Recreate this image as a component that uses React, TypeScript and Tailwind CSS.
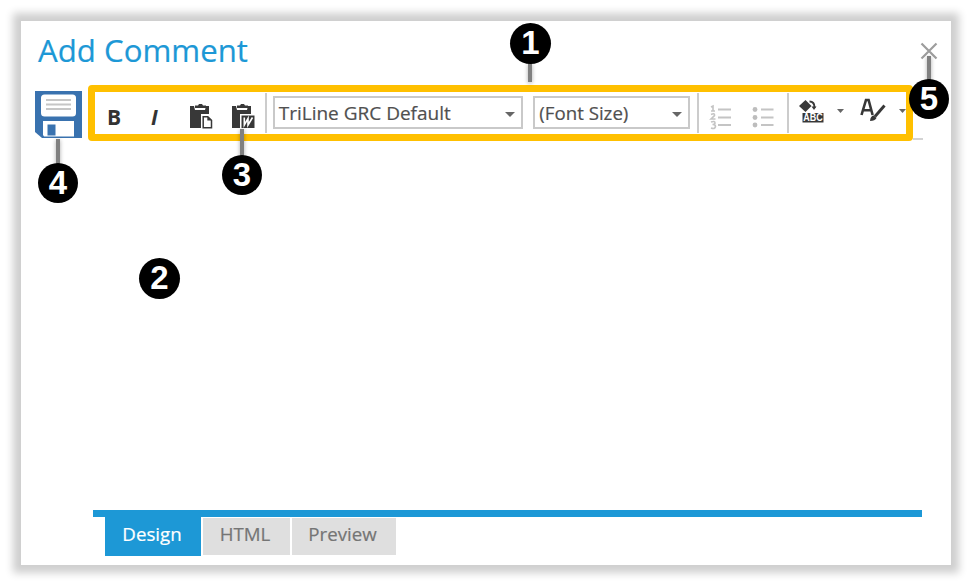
import type { ReactNode } from "react";
import clsx from "clsx";

const callouts = [
  { label: "1", circle: "left-[489px] top-[2px] size-[41px]", stem: "left-[507px] top-[42px] h-[19px]" },
  { label: "2", circle: "left-[118px] top-[237px] size-[41px]" },
  { label: "3", circle: "left-[201px] top-[134px] size-[40px]", stem: "left-[219px] top-[108px] h-[28px]" },
  { label: "4", circle: "left-[17px] top-[142px] size-[40px]", stem: "left-[35px] top-[118px] h-[26px]" },
  { label: "5", circle: "left-[888px] top-[58px] size-[40px]", stem: "left-[906px] top-[35px] h-[25px]" },
];

function FloppyIcon() {
  return (
    <svg width="47" height="48" viewBox="0 0 47 48">
      <path d="M0 0h47v47H7L0 41z" fill="#3972af" />
      <rect x="6" y="3.5" width="35" height="22" rx="3.5" fill="#fff" />
      <path d="M11 9h25M11 13.500h25M11 18h25" stroke="#c6c6c6" strokeWidth="1.900" />
      <path d="M8 30h31v15.500H9L8 44z" fill="#fff" />
      <rect x="12.500" y="33.500" width="8" height="11" fill="#3972af" />
    </svg>
  );
}

function ClipboardIcon({ word }: { word?: boolean }) {
  return (
    <svg width="24" height="27" viewBox="0 0 24 27">
      <path d="M1 3h4l1 4h10l1-4h3v22H1z" fill="#383838" />
      <path d="M6 5V2.500h3L10 1h3l1 1.500h3V5z" fill="#383838" />
      {word ? (
        <>
          <path d="M9 11h15v16H9z" fill="#fff" />
          <path d="M10.500 12.500h13v12.500h-13z" fill="#383838" />
          <path d="M13.300 14.500v7.500l3.700-6.500v6.500l4.500-7.500" fill="none" stroke="#fff" strokeWidth="1.600" />
        </>
      ) : (
        <>
          <path d="M12 11h8l4 4v12H12z" fill="#fff" />
          <path d="M14.200 13.700h4.600l3.700 3.500v7.500h-8.300z" fill="#fff" stroke="#383838" strokeWidth="1.500" />
          <path d="M18.300 13.500v4h4z" fill="#383838" />
        </>
      )}
    </svg>
  );
}

function ListIcon({ ordered }: { ordered?: boolean }) {
  return (
    <svg width="23" height="27" viewBox="0 0 23 27">
      <path d={ordered ? "M9 5.500h13M9 13.500h13M9 21h13" : "M9 5.500h12.500M9 13.500h12.500M9 21h12.500"} stroke="#c4c4c4" strokeWidth="1.900" />
      {ordered ? (
        <path
          d="M2 3l2-1v5M2 7h4M2 10.500q4-2 3.500 1L2 15h4.500M2 18q4-1.500 4 1 0 1.500-2.500 1.500 3 0 3 2Q6 25.500 2 24"
          fill="none"
          stroke="#c4c4c4"
          strokeWidth="1.600"
        />
      ) : (
        <g fill="#bdbdbd">
          <circle cx="3" cy="5.500" r="2.400" />
          <circle cx="3" cy="13.500" r="2.400" />
          <circle cx="3" cy="21" r="2.400" />
        </g>
      )}
    </svg>
  );
}

function HighlightIcon() {
  return (
    <svg width="27" height="26" viewBox="0 0 27 26">
      <path d="M0 7L6.500 1l6 6-6 6z" fill="#383838" />
      <path d="M10.500 2.500q5 0 5 6" fill="none" stroke="#383838" strokeWidth="2" />
      <path d="M12.500 7.500h5L15 11z" fill="#383838" />
      <path d="M3.500 14h21v9.500h-21z" fill="#383838" />
      <text x="4.300" y="22.400" fontSize="10" fontWeight="700" fontFamily="Liberation Sans, sans-serif" fill="#fff" textLength="19.500" lengthAdjust="spacingAndGlyphs">
        ABC
      </text>
    </svg>
  );
}

function FontColorIcon() {
  return (
    <svg width="27" height="26" viewBox="0 0 27 26" fill="none" stroke="#383838">
      <path d="M1.500 17L6 2h2.600l4 15M3.500 12.300h7.500" strokeWidth="2.600" />
      <path d="M24.500 7.500L15 18.500" strokeWidth="2.900" />
      <path d="M10 23q.5-5.500 4-5.500l2.500 2.500q-1.500 3-6.500 3z" fill="#383838" stroke="none" />
    </svg>
  );
}

function Caret({ small }: { small?: boolean }) {
  return (
    <svg width={small ? 7 : 10} height={small ? 4 : 5} viewBox="0 0 10 5" preserveAspectRatio="none">
      <path d="M0 0h10L5 5z" fill="#666" />
    </svg>
  );
}

function Select({ className, children }: { className?: string; children: ReactNode }) {
  return (
    <button className={clsx("mt-1 flex h-[33px] items-center justify-between border-2 border-[#c9c9c9] pr-[6px] pl-1 text-[#505050]", className)}>
      <span className="leading-[26px] whitespace-nowrap">{children}</span>
      <span className="mt-[4px]">
        <Caret />
      </span>
    </button>
  );
}

function Separator({ className }: { className?: string }) {
  return <div className={clsx("mt-px h-10 w-[2px] bg-[#cccccc]", className)} />;
}

function Toolbar() {
  return (
    <div className="flex h-14 w-[825px] items-start overflow-hidden rounded-[4px] border-[7px] border-[#ffc000] bg-white text-[#333]">
      <button className="mt-[11px] ml-[12px] w-[44px] text-left text-[21px] leading-7 font-bold">B</button>
      <button className="mt-[11px] w-[37px] text-left text-[21px] leading-7 font-bold italic">I</button>
      <button className="mt-[11px] ml-px w-[42px]">
        <ClipboardIcon />
      </button>
      <button className="mt-[11px] w-[34px]">
        <ClipboardIcon word />
      </button>
      <Separator />
      <Select className="ml-[6px] w-[251px] text-[19px] [-webkit-text-stroke:0.2px]">TriLine GRC Default</Select>
      <Select className="ml-[10px] w-[157px] text-[18.700px] [-webkit-text-stroke:0.2px]">(Font Size)</Select>
      <Separator className="ml-[7px]" />
      <button className="mt-[12px] ml-[10px]">
        <ListIcon ordered />
      </button>
      <button className="mt-[12px] ml-[20px]">
        <ListIcon />
      </button>
      <Separator className="ml-[12px]" />
      <button className="mt-[7px] ml-[10px]">
        <HighlightIcon />
      </button>
      <button className="mt-[17px] ml-[11px]">
        <Caret small />
      </button>
      <button className="mt-[6px] ml-[16px]">
        <FontColorIcon />
      </button>
      <button className="mt-[17px] ml-[12px] shrink-0">
        <Caret small />
      </button>
    </div>
  );
}

export default function App() {
  return (
    <div className="h-[586px] w-[972px] overflow-hidden bg-white p-[21px] font-['Open_Sans',sans-serif] [&_svg]:block">
      <div className="relative flex h-[544px] w-[930px] flex-col bg-white shadow-[0_0_8px_8px_#cfcfcf]">
        <header className="flex h-16 items-start justify-between pr-[13px] pl-[17px]">
          <h1 className="mt-[8px] text-[31.200px] leading-[42px] text-[#1d98d6] [-webkit-text-stroke:0.200px]">Add Comment</h1>
          <button className="mt-[21px]">
            <svg width="18" height="18" viewBox="0 0 18 18">
              <path d="M1.500 1.500l15 15M16.500 1.500l-15 15" stroke="#9d9d9d" strokeWidth="2.200" />
            </svg>
          </button>
        </header>

        <div className="flex items-start pl-[14px]">
          <button className="mt-[6px] mr-[6px]">
            <FloppyIcon />
          </button>
          <Toolbar />
          <div className="mt-[53px] h-[2px] w-[10px] bg-[#d3d3d3]" />
        </div>

        <main className="flex-1" />

        <footer className="mr-[29px] mb-[9px] ml-[72px] h-[46px] border-t-[7px] border-[#1d98d6]">
          <div className="flex pl-3 text-[18.700px] [-webkit-text-stroke:0.200px]">
            <button className="h-[39px] w-24 bg-[#1d98d6] pr-[2px] pb-[4px] text-white">Design</button>
            <button className="mt-[1px] ml-[2px] h-[37px] w-[87px] bg-[#dfdfdf] pr-[3px] pb-[4px] text-[#757575]">HTML</button>
            <button className="mt-[1px] ml-[2px] h-[37px] w-[104px] bg-[#dfdfdf] pr-[3px] pb-[4px] text-[#757575]">Preview</button>
          </div>
        </footer>

        {callouts.map((c) => (
          <div key={c.label}>
            {c.stem && <div className={clsx("absolute w-1 bg-[#808080] shadow-[0_1px_4px_#0005]", c.stem)} />}
            <div
              className={clsx(
                "absolute flex items-center justify-center rounded-full bg-black pb-[2px] font-['Liberation_Sans',sans-serif] text-[33px] leading-none font-bold text-white",
                c.circle
              )}
            >
              {c.label}
            </div>
          </div>
        ))}
      </div>
    </div>
  );
}
